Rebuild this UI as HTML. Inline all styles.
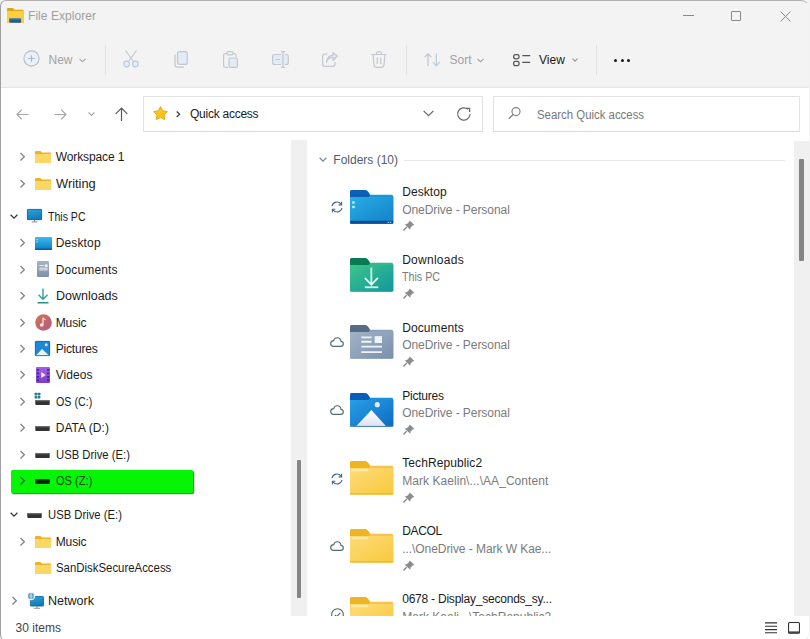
<!DOCTYPE html>
<html><head><meta charset="utf-8"><style>
*{margin:0;padding:0;box-sizing:border-box}
html,body{width:810px;height:639px;overflow:hidden;background:#fff}
body{position:relative;font-family:"Liberation Sans",sans-serif;font-size:12px;color:#1b1b1b}
.t{position:absolute;white-space:nowrap}
svg{position:absolute;overflow:visible}
.r{position:absolute}
</style></head><body>
<div class="r" style="left:0;top:88px;width:810px;height:551px;background:#fff"></div>
<div class="r" style="left:0;top:0;width:810px;height:88px;background:#f3f3f3"></div>
<div class="r" style="left:0;top:87px;width:810px;height:1px;background:#e5e5e5"></div>
<div class="r" style="left:0;top:0;width:810px;height:641px;border:1px solid #b0b0b0;border-left-color:#a0a0a0;border-right-color:#f2f2f2;border-bottom-color:#cfcfcf;border-radius:6px 9px 8px 6px"></div>
<svg style="left:7.4px;top:8px" width="17" height="15" viewBox="0 0 17 15">
<path d="M0 1 Q0 0 1 0 H6 L7.5 1.8 H16 Q16.6 1.8 16.6 2.5 V14.8 H0Z" fill="#d9a81a"/>
<rect x="0" y="3" width="16.6" height="11.8" rx="0.6" fill="#fbcf3e"/>
<rect x="2.3" y="10.6" width="11.8" height="4.2" rx="0.8" fill="#1c5c9c"/>
<rect x="2.3" y="10.6" width="11.8" height="1.3" fill="#2f7bb8"/>
</svg>
<div class="t " style="left:28px;top:10.34px;font-size:12px;line-height:12px;letter-spacing:0.045px;color:#a0a0a0;">File Explorer</div>
<div class="r" style="left:683px;top:15px;width:11px;height:1px;background:#8a8a8a"></div>
<div class="r" style="left:731px;top:11px;width:10px;height:10px;border:1px solid #8a8a8a;border-radius:1px"></div>
<svg style="left:780px;top:11px" width="11" height="11" viewBox="0 0 11 11"><path d="M0.5 0.5 L10.5 10.5 M10.5 0.5 L0.5 10.5" stroke="#8a8a8a" stroke-width="1"/></svg>
<svg style="left:22.6px;top:50.4px" width="17" height="17" viewBox="0 0 17 17">
<circle cx="8.5" cy="8.5" r="7.6" fill="#e9f0f9" stroke="#b9bcc2" stroke-width="1.1"/>
<path d="M8.5 5.3 V11.7 M5.3 8.5 H11.7" stroke="#b0b4bc" stroke-width="1.1"/></svg>
<div class="t " style="left:48.5px;top:54.44px;font-size:12px;line-height:12px;color:#a2a2a2;">New</div>
<svg style="left:79px;top:58px" width="7" height="5" viewBox="0 0 7 5"><path d="M0.5 0.8 L3.5 3.8 L6.5 0.8" fill="none" stroke="#a2a2a2" stroke-width="1.1"/></svg>
<div class="r" style="left:105px;top:45px;width:1px;height:30px;background:#e2e2e2"></div>
<svg style="left:123px;top:50px" width="16" height="18" viewBox="0 0 16 18">
<circle cx="3.6" cy="14" r="2.8" fill="#e6eef8" stroke="#b9c9df" stroke-width="1.2"/>
<circle cx="12.4" cy="14" r="2.8" fill="#e6eef8" stroke="#b9c9df" stroke-width="1.2"/>
<path d="M2.5 0.5 L10.5 11.5 M13.5 0.5 L5.5 11.5" stroke="#c3c7cf" stroke-width="1.2"/></svg>
<svg style="left:174px;top:51px" width="14" height="17" viewBox="0 0 14 17">
<rect x="3.5" y="0.6" width="9.8" height="12.8" rx="2" fill="#e3ebf5" stroke="#c3c7cf" stroke-width="1.2"/>
<path d="M1 3.5 V13.5 Q1 16.2 3.8 16.2 H10" fill="none" stroke="#c3c7cf" stroke-width="1.2"/></svg>
<svg style="left:223px;top:51px" width="15" height="17" viewBox="0 0 15 17">
<path d="M4 2.5 H2.5 Q0.6 2.5 0.6 4.5 V14.5 Q0.6 16.3 2.5 16.3 H5" fill="none" stroke="#c3c7cf" stroke-width="1.2"/>
<path d="M10 2.5 H11.5 Q13 2.5 13 4.5 V6" fill="none" stroke="#c3c7cf" stroke-width="1.2"/>
<rect x="4" y="0.6" width="6" height="3.2" rx="1" fill="none" stroke="#c3c7cf" stroke-width="1.2"/>
<rect x="6" y="7" width="8.4" height="9.4" rx="1.5" fill="#e3ebf5" stroke="#c3c7cf" stroke-width="1.2"/></svg>
<svg style="left:272px;top:51px" width="17" height="17" viewBox="0 0 17 17">
<rect x="0.6" y="3.5" width="15.7" height="10" rx="2" fill="#e3ebf5"/><path d="M9 3.5 H2.5 Q0.6 3.5 0.6 5.5 V11.5 Q0.6 13.5 2.5 13.5 H9" fill="none" stroke="#c3c7cf" stroke-width="1.2"/>
<path d="M13 3.5 H14.3 Q16.3 3.5 16.3 5.5 V11.5 Q16.3 13.5 14.3 13.5 H13" fill="none" stroke="#c3c7cf" stroke-width="1.2"/>
<path d="M11 0.6 V16.4 M9 0.6 H13 M9 16.4 H13 M3.5 8.5 H8" stroke="#c3c7cf" stroke-width="1.2"/></svg>
<svg style="left:322px;top:52px" width="16" height="15" viewBox="0 0 16 15">
<path d="M5.5 2 H2.5 Q0.6 2 0.6 4 V12 Q0.6 14.3 2.8 14.3 H11 Q13 14.3 13 12 V10" fill="none" stroke="#c3c7cf" stroke-width="1.2"/>
<path d="M4.5 10.5 Q5.5 5.5 11 5.5 V8.5 L15.3 4 L11 0.6 V3.3 Q5 3.5 4.5 10.5Z" fill="#dfe9f5" stroke="#c3c7cf" stroke-width="1.2" stroke-linejoin="round"/></svg>
<svg style="left:371px;top:51px" width="16" height="17" viewBox="0 0 16 17">
<path d="M0.5 3.5 H15.5 M5.5 3.5 V2.5 Q5.5 0.6 8 0.6 Q10.5 0.6 10.5 2.5 V3.5" fill="none" stroke="#c3c7cf" stroke-width="1.2"/>
<path d="M2 3.5 L3 14 Q3.3 16.3 5.5 16.3 H10.5 Q12.7 16.3 13 14 L14 3.5" fill="none" stroke="#c3c7cf" stroke-width="1.2"/>
<path d="M6.3 6.5 V13 M9.7 6.5 V13" stroke="#c3c7cf" stroke-width="1.2"/></svg>
<div class="r" style="left:406px;top:45px;width:1px;height:30px;background:#e2e2e2"></div>
<svg style="left:424px;top:53px" width="17" height="14" viewBox="0 0 17 14">
<path d="M4 13 V0.8 M0.6 4.2 L4 0.8 L7.4 4.2" fill="none" stroke="#c0c4cc" stroke-width="1.2"/>
<path d="M12.3 0.4 V12.6 M8.9 9.2 L12.3 12.6 L15.7 9.2" fill="none" stroke="#b4cbe4" stroke-width="1.2"/></svg>
<div class="t " style="left:449.5px;top:54.44px;font-size:12px;line-height:12px;color:#a2a2a2;">Sort</div>
<svg style="left:477px;top:58px" width="7" height="5" viewBox="0 0 7 5"><path d="M0.5 0.8 L3.5 3.8 L6.5 0.8" fill="none" stroke="#a2a2a2" stroke-width="1.1"/></svg>
<svg style="left:513px;top:53.5px" width="18" height="13" viewBox="0 0 18 13">
<rect x="0.65" y="0.65" width="5.4" height="4.2" rx="1.8" fill="none" stroke="#555" stroke-width="1.3"/>
<rect x="0.65" y="7.3" width="5.4" height="4.4" rx="1.8" fill="none" stroke="#555" stroke-width="1.3"/>
<path d="M9.3 1.6 H17.2 M9.3 8.4 H17.2" stroke="#555" stroke-width="1.3"/></svg>
<div class="t " style="left:539px;top:54.44px;font-size:12px;line-height:12px;color:#1b1b1b;">View</div>
<svg style="left:572px;top:58px" width="6" height="4" viewBox="0 0 6 4"><path d="M0.5 0.6 L3 3.2 L5.5 0.6" fill="none" stroke="#999" stroke-width="1.2"/></svg>
<div class="r" style="left:596px;top:45px;width:1px;height:30px;background:#e2e2e2"></div>
<div class="r" style="left:614px;top:59px;width:3.3px;height:3.3px;border-radius:50%;background:#1b1b1b"></div>
<div class="r" style="left:620.5px;top:59px;width:3.3px;height:3.3px;border-radius:50%;background:#1b1b1b"></div>
<div class="r" style="left:627px;top:59px;width:3.3px;height:3.3px;border-radius:50%;background:#1b1b1b"></div>
<svg style="left:16px;top:109px" width="13" height="11" viewBox="0 0 13 11"><path d="M12.5 5.5 H1 M5.8 0.6 L1 5.5 L5.8 10.4" fill="none" stroke="#a6a6a6" stroke-width="1.2"/></svg>
<svg style="left:54px;top:109px" width="13" height="11" viewBox="0 0 13 11"><path d="M0.5 5.5 H12 M7.2 0.6 L12 5.5 L7.2 10.4" fill="none" stroke="#a6a6a6" stroke-width="1.2"/></svg>
<svg style="left:88px;top:112px" width="7" height="4" viewBox="0 0 7 4"><path d="M0.5 0.5 L3.5 3.5 L6.5 0.5" fill="none" stroke="#a6a6a6" stroke-width="1.1"/></svg>
<svg style="left:115px;top:107px" width="13" height="14" viewBox="0 0 13 14"><path d="M6.5 14 V1 M0.7 6.8 L6.5 1 L12.3 6.8" fill="none" stroke="#5a5a5a" stroke-width="1.2"/></svg>
<div class="r" style="left:143px;top:96px;width:340px;height:36px;background:#fff;border:1px solid #e3e3e3;border-bottom-color:#d9d9d9"></div>
<svg style="left:153.3px;top:105.5px" width="15" height="15" viewBox="0 0 15 15"><path d="M7.50 0.60 L9.73 4.73 L14.35 5.58 L11.11 8.97 L11.73 13.62 L7.50 11.60 L3.27 13.62 L3.89 8.97 L0.65 5.58 L5.27 4.73Z" fill="#fcc21b" stroke="#dca812" stroke-width="0.9" stroke-linejoin="round"/></svg>
<svg style="left:176.3px;top:110.6px" width="5" height="7" viewBox="0 0 5 7"><path d="M0.7 0.5 L3.6 3.2 L0.7 5.9" fill="none" stroke="#444" stroke-width="1.3"/></svg>
<div class="t " style="left:190px;top:108.14px;font-size:12px;line-height:12px;color:#1b1b1b;letter-spacing:-0.25px;">Quick access</div>
<svg style="left:423px;top:110px" width="11" height="7" viewBox="0 0 11 7"><path d="M0.6 0.8 L5.5 5.7 L10.4 0.8" fill="none" stroke="#666" stroke-width="1.2"/></svg>
<svg style="left:457px;top:106.6px" width="14" height="14" viewBox="0 0 14 14"><path d="M13 7.3 A6.2 6.2 0 1 1 11 2.4" fill="none" stroke="#6a6a6a" stroke-width="1.25"/><path d="M9 1.4 H12.6 V5" fill="none" stroke="#6a6a6a" stroke-width="1.25"/></svg>
<div class="r" style="left:493px;top:96px;width:307px;height:36px;background:#fff;border:1px solid #e3e3e3;border-bottom-color:#d9d9d9"></div>
<svg style="left:508px;top:107px" width="13" height="13" viewBox="0 0 13 13"><circle cx="8" cy="4.6" r="4" fill="none" stroke="#808080" stroke-width="1.15"/><path d="M5.1 7.5 L0.8 11.8" stroke="#808080" stroke-width="1.3"/></svg>
<div class="t " style="left:536.5px;top:109.04px;font-size:12px;line-height:12px;transform:scaleX(0.9495);transform-origin:0 0;color:#777777;">Search Quick access</div>
<div class="r" style="left:10.5px;top:470px;width:182.5px;height:22.5px;background:#06f406;border-radius:1.5px;box-shadow:1px 1px 1.5px rgba(20,70,20,0.85)"></div>
<svg style="left:20.4px;top:153.4px" width="5" height="8" viewBox="0 0 5 8"><path d="M0.5 0.1 L4.3 3.8 L0.5 7.5" fill="none" stroke="#858585" stroke-width="1.35"/></svg>
<svg style="left:35px;top:151.4px" width="16" height="12" viewBox="0 0 16 12">
<path d="M0 1 Q0 0 1 0 H5.5 L7 1.5 H15 Q16 1.5 16 2.5 V11 Q16 12 15 12 H1 Q0 12 0 11Z" fill="#e9b42c"/>
<path d="M0 3 H16 V11 Q16 12 15 12 H1 Q0 12 0 11Z" fill="#fcd766"/>
</svg>
<div class="t " style="left:55.7px;top:151.44px;font-size:12px;line-height:12px;letter-spacing:-0.110px;color:#1b1b1b;">Workspace 1</div>
<svg style="left:20.4px;top:180.20000000000002px" width="5" height="8" viewBox="0 0 5 8"><path d="M0.5 0.1 L4.3 3.8 L0.5 7.5" fill="none" stroke="#858585" stroke-width="1.35"/></svg>
<svg style="left:35px;top:178.2px" width="16" height="12" viewBox="0 0 16 12">
<path d="M0 1 Q0 0 1 0 H5.5 L7 1.5 H15 Q16 1.5 16 2.5 V11 Q16 12 15 12 H1 Q0 12 0 11Z" fill="#e9b42c"/>
<path d="M0 3 H16 V11 Q16 12 15 12 H1 Q0 12 0 11Z" fill="#fcd766"/>
</svg>
<div class="t " style="left:55.7px;top:178.24px;font-size:12px;line-height:12px;transform:scaleX(1.0694);transform-origin:0 0;color:#1b1b1b;">Writing</div>
<svg style="left:10.4px;top:213.9px" width="8" height="5" viewBox="0 0 8 5"><path d="M0.6 0.7 L4 4.1 L7.4 0.7" fill="none" stroke="#3a3a3a" stroke-width="1.3"/></svg>
<svg style="left:27px;top:209px" width="15" height="14" viewBox="0 0 15 14">
<defs><linearGradient id="gpc" x1="0" y1="0" x2="0.3" y2="1"><stop offset="0" stop-color="#2aa8dc"/><stop offset="1" stop-color="#1479b8"/></linearGradient></defs>
<rect x="0" y="0" width="15" height="11" rx="0.8" fill="url(#gpc)"/><rect x="0.4" y="0.4" width="14.2" height="10.2" rx="0.6" fill="none" stroke="#0f6898" stroke-width="0.7"/>
<rect x="7" y="11" width="1.2" height="1.5" fill="#8a8a8a"/><rect x="4.8" y="12.4" width="5.6" height="1" fill="#8a8a8a"/></svg>
<div class="t " style="left:48px;top:210.74px;font-size:12px;line-height:12px;transform:scaleX(0.8788);transform-origin:0 0;color:#1b1b1b;">This PC</div>
<svg style="left:20.4px;top:239.4px" width="5" height="8" viewBox="0 0 5 8"><path d="M0.5 0.1 L4.3 3.8 L0.5 7.5" fill="none" stroke="#858585" stroke-width="1.35"/></svg>
<svg style="left:35px;top:236.8px" width="17" height="13" viewBox="0 0 17 13">
<defs><linearGradient id="gdk" x1="0" y1="0" x2="0" y2="1"><stop offset="0" stop-color="#3bbcee"/><stop offset="1" stop-color="#0c7bc6"/></linearGradient></defs>
<rect x="0" y="0" width="17" height="13" rx="1" fill="url(#gdk)"/><rect x="0" y="11.5" width="17" height="1.5" fill="#0a5d9e"/>
<rect x="1.5" y="2" width="1.2" height="1.2" fill="#bfeaff"/><rect x="1.5" y="4.2" width="1.2" height="1.2" fill="#bfeaff"/></svg>
<div class="t " style="left:55.7px;top:237.44px;font-size:12px;line-height:12px;letter-spacing:0.147px;color:#1b1b1b;">Desktop</div>
<svg style="left:20.4px;top:265.79999999999995px" width="5" height="8" viewBox="0 0 5 8"><path d="M0.5 0.1 L4.3 3.8 L0.5 7.5" fill="none" stroke="#858585" stroke-width="1.35"/></svg>
<svg style="left:37px;top:260.9px" width="12" height="16" viewBox="0 0 12 16">
<defs><linearGradient id="gdc" x1="0" y1="0" x2="0" y2="1"><stop offset="0" stop-color="#a7b4c4"/><stop offset="1" stop-color="#7f8fa4"/></linearGradient></defs>
<rect x="0" y="0" width="12" height="16" rx="1.2" fill="url(#gdc)"/>
<path d="M2.3 4.6 H6.8 M2.3 7.2 H10.7 M2.3 8.9 H10.7" stroke="#f2f5f9" stroke-width="0.9"/><rect x="7.8" y="3.4" width="2.8" height="2.6" fill="#eaf1f8"/></svg>
<div class="t " style="left:55.7px;top:263.84px;font-size:12px;line-height:12px;letter-spacing:0.139px;color:#1b1b1b;">Documents</div>
<svg style="left:20.4px;top:292.29999999999995px" width="5" height="8" viewBox="0 0 5 8"><path d="M0.5 0.1 L4.3 3.8 L0.5 7.5" fill="none" stroke="#858585" stroke-width="1.35"/></svg>
<svg style="left:37px;top:287.59999999999997px" width="12" height="16" viewBox="0 0 12 16">
<path d="M6 0.5 V11 M1.5 6.8 L6 11.3 L10.5 6.8" fill="none" stroke="#2aa39a" stroke-width="1.4"/><rect x="0.5" y="14" width="11" height="1.5" fill="#2a8f8c"/></svg>
<div class="t " style="left:55.7px;top:290.34px;font-size:12px;line-height:12px;transform:scaleX(1.0408);transform-origin:0 0;color:#1b1b1b;">Downloads</div>
<svg style="left:20.4px;top:318.59999999999997px" width="5" height="8" viewBox="0 0 5 8"><path d="M0.5 0.1 L4.3 3.8 L0.5 7.5" fill="none" stroke="#858585" stroke-width="1.35"/></svg>
<svg style="left:35px;top:314.2px" width="17" height="17" viewBox="0 0 17 17">
<defs><linearGradient id="gmu" x1="0" y1="0" x2="1" y2="1"><stop offset="0" stop-color="#d4764a"/><stop offset="1" stop-color="#b0578e"/></linearGradient></defs>
<circle cx="8.5" cy="8.5" r="8.3" fill="url(#gmu)"/>
<path d="M8 3.8 V10.8" stroke="#fde8ec" stroke-width="1.2"/><path d="M8 3.8 Q9 5.6 10.6 5.8" fill="none" stroke="#fde8ec" stroke-width="1.1"/><circle cx="6.7" cy="11" r="1.8" fill="#fde8ec"/></svg>
<div class="t " style="left:55.7px;top:316.64px;font-size:12px;line-height:12px;letter-spacing:-0.111px;color:#1b1b1b;">Music</div>
<svg style="left:20.4px;top:344.9px" width="5" height="8" viewBox="0 0 5 8"><path d="M0.5 0.1 L4.3 3.8 L0.5 7.5" fill="none" stroke="#858585" stroke-width="1.35"/></svg>
<svg style="left:35.4px;top:341.0px" width="15" height="15" viewBox="0 0 15 15">
<rect x="0" y="0" width="15" height="15" rx="1.2" fill="#1e88d6"/>
<path d="M1 14.6 L7 8 L14 14.6Z" fill="#eaf4fc"/><circle cx="11.2" cy="3.8" r="1.5" fill="#bfe6fb"/><rect x="0.35" y="0.35" width="14.3" height="14.3" rx="1" fill="none" stroke="#125f9c" stroke-width="0.7"/></svg>
<div class="t " style="left:55.7px;top:342.94px;font-size:12px;line-height:12px;letter-spacing:-0.192px;color:#1b1b1b;">Pictures</div>
<svg style="left:20.4px;top:371.4px" width="5" height="8" viewBox="0 0 5 8"><path d="M0.5 0.1 L4.3 3.8 L0.5 7.5" fill="none" stroke="#858585" stroke-width="1.35"/></svg>
<svg style="left:36.3px;top:367.0px" width="14" height="16" viewBox="0 0 14 16">
<defs><linearGradient id="gvd" x1="0" y1="0" x2="0" y2="1"><stop offset="0" stop-color="#a35ee8"/><stop offset="1" stop-color="#7b3fc4"/></linearGradient></defs>
<rect x="0" y="0" width="14" height="16" rx="1" fill="url(#gvd)"/>
<path d="M0.8 2.8 H3 M0.8 6.4 H3 M0.8 9.8 H3 M0.8 13.2 H3 M11 2.8 H13.2 M11 6.4 H13.2 M11 9.8 H13.2 M11 13.2 H13.2" stroke="#4b2490" stroke-width="1.7"/>
<path d="M5.2 5 L9.8 8 L5.2 11Z" fill="#f6e6f8"/></svg>
<div class="t " style="left:55.7px;top:369.44px;font-size:12px;line-height:12px;letter-spacing:0.066px;color:#1b1b1b;">Videos</div>
<svg style="left:20.4px;top:397.99999999999994px" width="5" height="8" viewBox="0 0 5 8"><path d="M0.5 0.1 L4.3 3.8 L0.5 7.5" fill="none" stroke="#858585" stroke-width="1.35"/></svg>
<svg style="left:35.4px;top:391.99999999999994px" width="15" height="14" viewBox="0 0 15 14"><rect x="-0.4" y="0.8" width="2.7" height="2.7" rx="0.4" fill="#2e7d8c"/><rect x="2.7" y="0.8" width="2.7" height="2.7" rx="0.4" fill="#2e7d8c"/><rect x="-0.4" y="3.9" width="2.7" height="2.7" rx="0.4" fill="#2e7d8c"/><rect x="2.7" y="3.9" width="2.7" height="2.7" rx="0.4" fill="#2e7d8c"/><rect x="0.3" y="8" width="14.4" height="5.1" rx="0.8" fill="#333333"/><rect x="0.3" y="8" width="14.4" height="1.3" rx="0.6" fill="#6e6e6e"/></svg>
<div class="t " style="left:55.7px;top:396.04px;font-size:12px;line-height:12px;transform:scaleX(0.8904);transform-origin:0 0;color:#1b1b1b;">OS (C:)</div>
<svg style="left:20.4px;top:424.4px" width="5" height="8" viewBox="0 0 5 8"><path d="M0.5 0.1 L4.3 3.8 L0.5 7.5" fill="none" stroke="#858585" stroke-width="1.35"/></svg>
<svg style="left:35.4px;top:418.4px" width="15" height="14" viewBox="0 0 15 14"><rect x="0.3" y="8" width="14.4" height="5.1" rx="0.8" fill="#333333"/><rect x="0.3" y="8" width="14.4" height="1.3" rx="0.6" fill="#6e6e6e"/></svg>
<div class="t " style="left:55.7px;top:422.44px;font-size:12px;line-height:12px;letter-spacing:0.039px;color:#1b1b1b;">DATA (D:)</div>
<svg style="left:20.4px;top:451.4px" width="5" height="8" viewBox="0 0 5 8"><path d="M0.5 0.1 L4.3 3.8 L0.5 7.5" fill="none" stroke="#858585" stroke-width="1.35"/></svg>
<svg style="left:35.4px;top:445.4px" width="15" height="14" viewBox="0 0 15 14"><rect x="0.3" y="8" width="14.4" height="5.1" rx="0.8" fill="#333333"/><rect x="0.3" y="8" width="14.4" height="1.3" rx="0.6" fill="#6e6e6e"/></svg>
<div class="t " style="left:55.7px;top:449.44px;font-size:12px;line-height:12px;transform:scaleX(0.9393);transform-origin:0 0;color:#1b1b1b;">USB Drive (E:)</div>
<svg style="left:20.4px;top:477.4px" width="5" height="8" viewBox="0 0 5 8"><path d="M0.5 0.1 L4.3 3.8 L0.5 7.5" fill="none" stroke="#2a6a2a" stroke-width="1.35"/></svg>
<svg style="left:35.4px;top:471.4px" width="15" height="14" viewBox="0 0 15 14"><rect x="0.3" y="8" width="14.4" height="5.1" rx="0.8" fill="#042a04"/><rect x="0.3" y="8" width="14.4" height="1.3" rx="0.6" fill="#0a4a0a"/></svg>
<div class="t " style="left:55.7px;top:475.44px;font-size:12px;line-height:12px;transform:scaleX(0.9234);transform-origin:0 0;color:#0d4a0d;">OS (Z:)</div>
<svg style="left:10.4px;top:512.3px" width="8" height="5" viewBox="0 0 8 5"><path d="M0.6 0.7 L4 4.1 L7.4 0.7" fill="none" stroke="#3a3a3a" stroke-width="1.3"/></svg>
<svg style="left:27.2px;top:505.0999999999999px" width="15" height="14" viewBox="0 0 15 14"><rect x="0.3" y="8" width="14.4" height="5.1" rx="0.8" fill="#333333"/><rect x="0.3" y="8" width="14.4" height="1.3" rx="0.6" fill="#6e6e6e"/></svg>
<div class="t " style="left:48px;top:509.14px;font-size:12px;line-height:12px;transform:scaleX(0.9393);transform-origin:0 0;color:#1b1b1b;">USB Drive (E:)</div>
<svg style="left:20.4px;top:537.5px" width="5" height="8" viewBox="0 0 5 8"><path d="M0.5 0.1 L4.3 3.8 L0.5 7.5" fill="none" stroke="#858585" stroke-width="1.35"/></svg>
<svg style="left:35px;top:535.5px" width="16" height="12" viewBox="0 0 16 12">
<path d="M0 1 Q0 0 1 0 H5.5 L7 1.5 H15 Q16 1.5 16 2.5 V11 Q16 12 15 12 H1 Q0 12 0 11Z" fill="#e9b42c"/>
<path d="M0 3 H16 V11 Q16 12 15 12 H1 Q0 12 0 11Z" fill="#fcd766"/>
</svg>
<div class="t " style="left:55.7px;top:535.54px;font-size:12px;line-height:12px;letter-spacing:-0.111px;color:#1b1b1b;">Music</div>
<svg style="left:35px;top:562.0px" width="16" height="12" viewBox="0 0 16 12">
<path d="M0 1 Q0 0 1 0 H5.5 L7 1.5 H15 Q16 1.5 16 2.5 V11 Q16 12 15 12 H1 Q0 12 0 11Z" fill="#e9b42c"/>
<path d="M0 3 H16 V11 Q16 12 15 12 H1 Q0 12 0 11Z" fill="#fcd766"/>
</svg>
<div class="t " style="left:55.7px;top:562.04px;font-size:12px;line-height:12px;transform:scaleX(0.9499);transform-origin:0 0;color:#1b1b1b;">SanDiskSecureAccess</div>
<svg style="left:11.7px;top:596.6999999999999px" width="5" height="8" viewBox="0 0 5 8"><path d="M0.5 0.1 L4.3 3.8 L0.5 7.5" fill="none" stroke="#858585" stroke-width="1.35"/></svg>
<svg style="left:26.5px;top:591.5px" width="17" height="17" viewBox="0 0 17 17">
<defs><linearGradient id="gnt" x1="0" y1="0" x2="0.3" y2="1"><stop offset="0" stop-color="#2aa6dc"/><stop offset="1" stop-color="#1279b8"/></linearGradient></defs>
<rect x="3.4" y="4.5" width="13.1" height="9.6" rx="0.6" fill="url(#gnt)" stroke="#0e6a9a" stroke-width="0.8"/>
<rect x="9.3" y="14.1" width="1.2" height="1.8" fill="#8a8a8a"/><rect x="6.8" y="15.8" width="6.2" height="1" fill="#9a9a9a"/>
<circle cx="4" cy="4" r="3.8" fill="#5f9cc2" stroke="#ffffff" stroke-width="1"/><path d="M1.2 4 H6.8 M4 1 Q2.6 4 4 7 Q5.4 4 4 1" fill="none" stroke="#cbe6f5" stroke-width="0.6"/></svg>
<div class="t " style="left:48px;top:594.74px;font-size:12px;line-height:12px;transform:scaleX(1.0428);transform-origin:0 0;color:#1b1b1b;">Network</div>
<div class="r" style="left:291px;top:140px;width:16px;height:476px;background:#f0f0f0"></div>
<div class="r" style="left:296.8px;top:460px;width:4.4px;height:138px;background:#858585;border-radius:1px"></div>
<svg style="left:318.5px;top:157.4px" width="8" height="5" viewBox="0 0 8 5"><path d="M0.6 0.7 L4 4.1 L7.4 0.7" fill="none" stroke="#7d8996" stroke-width="1.3"/></svg>
<div class="t " style="left:333.3px;top:153.84px;font-size:12px;line-height:12px;color:#4f5e6e;">Folders (10)</div>
<div class="r" style="left:404px;top:160px;width:381px;height:1px;background:#e8e8e8"></div>
<div class="r" style="left:793.5px;top:141px;width:16.5px;height:475px;background:#f0f0f0"></div>
<div class="r" style="left:798.8px;top:159px;width:5.4px;height:102px;background:#858585;border-radius:1px"></div>
<div class="r" style="left:307px;top:172px;width:486px;height:444px;overflow:hidden">
<div class="r" style="left:-307px;top:-172px;width:810px;height:639px">
<svg style="left:350px;top:189.6px" width="43.3" height="34.5" viewBox="0 0 44 35" preserveAspectRatio="none"><defs><linearGradient id="g189" x1="0" y1="0" x2="1" y2="1"><stop offset="0" stop-color="#28aee4"/><stop offset="1" stop-color="#137fc9"/></linearGradient></defs>
<path d="M0 2 Q0 0 2 0 H15 Q17 0 18.3 1.8 L20.3 4.7 H42 Q44 4.7 44 6.7 V34 H0Z" fill="#1799d6"/><path d="M0 2 Q0 0 2 0 H15 Q17 0 18.3 1.8 L20.3 4.7 Q19.5 7.3 18 7.3 H0Z" fill="#0b5fb4"/><path d="M0 7.2 H44 V32.5 Q44 34.3 42.2 34.3 H1.8 Q0 34.3 0 32.5Z" fill="url(#g189)"/><rect x="0" y="31.3" width="44" height="3" rx="1" fill="#0a4f95"/>
<rect x="2.2" y="11.5" width="2.6" height="2.4" rx="0.6" fill="#b8f2ff"/><rect x="2.2" y="16" width="2.6" height="2.4" rx="0.6" fill="#b8f2ff"/>
<rect x="38.3" y="32.2" width="1.3" height="1.3" fill="#9fdcff"/><rect x="40.6" y="32.2" width="1.3" height="1.3" fill="#9fdcff"/></svg>
<svg style="left:330.5px;top:201.4px" width="12" height="12" viewBox="0 0 12 12"><path d="M1 5 A5 5 0 0 1 10 3.2 M11 7 A5 5 0 0 1 2 8.8" fill="none" stroke="#436a88" stroke-width="1.15"/><path d="M10.6 0.8 V3.8 H7.6 M1.4 11.2 V8.2 H4.4" fill="none" stroke="#436a88" stroke-width="1.15"/></svg>
<div class="t " style="left:402.2px;top:185.84px;font-size:12px;line-height:12px;letter-spacing:0.081px;color:#1b1b1b;">Desktop</div>
<div class="t " style="left:402.2px;top:203.54px;font-size:12px;line-height:12px;letter-spacing:-0.061px;color:#7b7b7b;">OneDrive - Personal</div>
<svg style="left:402.5px;top:220.0px" width="12" height="11" viewBox="0 0 12 11"><path d="M6.8 0.6 L11.4 5 L9.6 5.6 L7.6 7.6 L7.2 9.8 L1.8 4.4 L4 4 L6 2Z" fill="#8c8c8c"/><path d="M3.8 7 L0.5 10.5" stroke="#8c8c8c" stroke-width="1.3"/></svg>
<svg style="left:350px;top:257.5px" width="43.3" height="34.5" viewBox="0 0 44 35" preserveAspectRatio="none"><defs><linearGradient id="g257" x1="0" y1="0" x2="1" y2="1"><stop offset="0" stop-color="#3cc48c"/><stop offset="1" stop-color="#12979c"/></linearGradient></defs>
<path d="M0 2 Q0 0 2 0 H15 Q17 0 18.3 1.8 L20.3 4.7 H42 Q44 4.7 44 6.7 V34 H0Z" fill="#2fb98e"/><path d="M0 2 Q0 0 2 0 H15 Q17 0 18.3 1.8 L20.3 4.7 Q19.5 7.3 18 7.3 H0Z" fill="#0b7a52"/><path d="M0 7.2 H44 V32.5 Q44 34.3 42.2 34.3 H1.8 Q0 34.3 0 32.5Z" fill="url(#g257)"/><path d="M21.7 10 V27 M15 20.2 L21.7 27 L28.4 20.2" fill="none" stroke="#d4fff2" stroke-width="1.8"/><rect x="15" y="28.8" width="13.7" height="1.8" fill="#d4fff2"/></svg>
<div class="t " style="left:402.2px;top:253.74px;font-size:12px;line-height:12px;letter-spacing:0.266px;color:#1b1b1b;">Downloads</div>
<div class="t " style="left:402.2px;top:271.44px;font-size:12px;line-height:12px;transform:scaleX(0.8905);transform-origin:0 0;color:#7b7b7b;">This PC</div>
<svg style="left:402.5px;top:287.9px" width="12" height="11" viewBox="0 0 12 11"><path d="M6.8 0.6 L11.4 5 L9.6 5.6 L7.6 7.6 L7.2 9.8 L1.8 4.4 L4 4 L6 2Z" fill="#8c8c8c"/><path d="M3.8 7 L0.5 10.5" stroke="#8c8c8c" stroke-width="1.3"/></svg>
<svg style="left:350px;top:325.4px" width="43.3" height="34.5" viewBox="0 0 44 35" preserveAspectRatio="none"><defs><linearGradient id="g325" x1="0" y1="0" x2="1" y2="1"><stop offset="0" stop-color="#a3b3c7"/><stop offset="1" stop-color="#7890ab"/></linearGradient></defs>
<path d="M0 2 Q0 0 2 0 H15 Q17 0 18.3 1.8 L20.3 4.7 H42 Q44 4.7 44 6.7 V34 H0Z" fill="#8ea2b9"/><path d="M0 2 Q0 0 2 0 H15 Q17 0 18.3 1.8 L20.3 4.7 Q19.5 7.3 18 7.3 H0Z" fill="#566c82"/><path d="M0 7.2 H44 V32.5 Q44 34.3 42.2 34.3 H1.8 Q0 34.3 0 32.5Z" fill="url(#g325)"/><path d="M11.5 12.5 H22 M11.5 17 H22 M11.5 22 H32.5 M11.5 27.5 H32.5" stroke="#eef3f8" stroke-width="1.8"/><rect x="25" y="11.3" width="7.5" height="7" fill="#eef3f8"/></svg>
<svg style="left:329.8px;top:337.1px" width="14" height="10" viewBox="0 0 14 10"><path d="M3.5 9.3 H10.8 Q13.3 9.3 13.3 6.9 Q13.3 4.6 11 4.4 Q10.6 0.7 7.2 0.7 Q4.4 0.7 3.7 3.6 Q0.7 3.8 0.7 6.5 Q0.7 9.3 3.5 9.3Z" fill="none" stroke="#526c78" stroke-width="1.15"/></svg>
<div class="t " style="left:402.2px;top:321.64px;font-size:12px;line-height:12px;letter-spacing:0.102px;color:#1b1b1b;">Documents</div>
<div class="t " style="left:402.2px;top:339.34px;font-size:12px;line-height:12px;letter-spacing:-0.061px;color:#7b7b7b;">OneDrive - Personal</div>
<svg style="left:402.5px;top:355.8px" width="12" height="11" viewBox="0 0 12 11"><path d="M6.8 0.6 L11.4 5 L9.6 5.6 L7.6 7.6 L7.2 9.8 L1.8 4.4 L4 4 L6 2Z" fill="#8c8c8c"/><path d="M3.8 7 L0.5 10.5" stroke="#8c8c8c" stroke-width="1.3"/></svg>
<svg style="left:350px;top:393.3px" width="43.3" height="34.5" viewBox="0 0 44 35" preserveAspectRatio="none"><defs><linearGradient id="g393" x1="0" y1="0" x2="1" y2="1"><stop offset="0" stop-color="#2a9de6"/><stop offset="1" stop-color="#0b6cc3"/></linearGradient></defs>
<path d="M0 2 Q0 0 2 0 H15 Q17 0 18.3 1.8 L20.3 4.7 H42 Q44 4.7 44 6.7 V34 H0Z" fill="#1b8fe0"/><path d="M0 2 Q0 0 2 0 H15 Q17 0 18.3 1.8 L20.3 4.7 Q19.5 7.3 18 7.3 H0Z" fill="#0a5db6"/><path d="M0 7.2 H44 V32.5 Q44 34.3 42.2 34.3 H1.8 Q0 34.3 0 32.5Z" fill="url(#g393)"/><defs><linearGradient id="mg393" x1="0" y1="0" x2="0" y2="1"><stop offset="0" stop-color="#ffffff"/><stop offset="1" stop-color="#dfe3f0"/></linearGradient></defs>
<path d="M6.5 33.6 L21.7 17.2 L36.5 33.6Z" fill="url(#mg393)"/><circle cx="27.7" cy="11.8" r="2.6" fill="#d6f0ff"/><rect x="0" y="33.3" width="44" height="1" fill="#6a7f9a" opacity="0.5"/></svg>
<svg style="left:329.8px;top:405.0px" width="14" height="10" viewBox="0 0 14 10"><path d="M3.5 9.3 H10.8 Q13.3 9.3 13.3 6.9 Q13.3 4.6 11 4.4 Q10.6 0.7 7.2 0.7 Q4.4 0.7 3.7 3.6 Q0.7 3.8 0.7 6.5 Q0.7 9.3 3.5 9.3Z" fill="none" stroke="#526c78" stroke-width="1.15"/></svg>
<div class="t " style="left:402.2px;top:389.54px;font-size:12px;line-height:12px;letter-spacing:-0.235px;color:#1b1b1b;">Pictures</div>
<div class="t " style="left:402.2px;top:407.24px;font-size:12px;line-height:12px;letter-spacing:-0.061px;color:#7b7b7b;">OneDrive - Personal</div>
<svg style="left:402.5px;top:423.7px" width="12" height="11" viewBox="0 0 12 11"><path d="M6.8 0.6 L11.4 5 L9.6 5.6 L7.6 7.6 L7.2 9.8 L1.8 4.4 L4 4 L6 2Z" fill="#8c8c8c"/><path d="M3.8 7 L0.5 10.5" stroke="#8c8c8c" stroke-width="1.3"/></svg>
<svg style="left:350px;top:461.2px" width="43.3" height="34.5" viewBox="0 0 44 35" preserveAspectRatio="none"><defs><linearGradient id="g461" x1="0" y1="0" x2="1" y2="1"><stop offset="0" stop-color="#fddb78"/><stop offset="1" stop-color="#f9c93c"/></linearGradient></defs>
<path d="M0 2 Q0 0 2 0 H15 Q17 0 18.3 1.8 L20.3 4.7 H42 Q44 4.7 44 6.7 V34 H0Z" fill="#f3c452"/><path d="M0 2 Q0 0 2 0 H15 Q17 0 18.3 1.8 L20.3 4.7 Q19.5 7.3 18 7.3 H0Z" fill="#edb425"/><path d="M0 7.2 H44 V32.5 Q44 34.3 42.2 34.3 H1.8 Q0 34.3 0 32.5Z" fill="url(#g461)"/><rect x="1.5" y="8.2" width="17" height="2.2" fill="#fff0c0" opacity="0.75"/><path d="M0 33.3 H44" stroke="#e6b23a" stroke-width="1"/></svg>
<svg style="left:330.5px;top:473.0px" width="12" height="12" viewBox="0 0 12 12"><path d="M1 5 A5 5 0 0 1 10 3.2 M11 7 A5 5 0 0 1 2 8.8" fill="none" stroke="#436a88" stroke-width="1.15"/><path d="M10.6 0.8 V3.8 H7.6 M1.4 11.2 V8.2 H4.4" fill="none" stroke="#436a88" stroke-width="1.15"/></svg>
<div class="t " style="left:402.2px;top:457.44px;font-size:12px;line-height:12px;letter-spacing:0.098px;color:#1b1b1b;">TechRepublic2</div>
<div class="t " style="left:402.2px;top:475.14px;font-size:12px;line-height:12px;letter-spacing:0.052px;color:#7b7b7b;">Mark Kaelin\...\AA_Content</div>
<svg style="left:402.5px;top:491.6px" width="12" height="11" viewBox="0 0 12 11"><path d="M6.8 0.6 L11.4 5 L9.6 5.6 L7.6 7.6 L7.2 9.8 L1.8 4.4 L4 4 L6 2Z" fill="#8c8c8c"/><path d="M3.8 7 L0.5 10.5" stroke="#8c8c8c" stroke-width="1.3"/></svg>
<svg style="left:350px;top:529.1px" width="43.3" height="34.5" viewBox="0 0 44 35" preserveAspectRatio="none"><defs><linearGradient id="g529" x1="0" y1="0" x2="1" y2="1"><stop offset="0" stop-color="#fddb78"/><stop offset="1" stop-color="#f9c93c"/></linearGradient></defs>
<path d="M0 2 Q0 0 2 0 H15 Q17 0 18.3 1.8 L20.3 4.7 H42 Q44 4.7 44 6.7 V34 H0Z" fill="#f3c452"/><path d="M0 2 Q0 0 2 0 H15 Q17 0 18.3 1.8 L20.3 4.7 Q19.5 7.3 18 7.3 H0Z" fill="#edb425"/><path d="M0 7.2 H44 V32.5 Q44 34.3 42.2 34.3 H1.8 Q0 34.3 0 32.5Z" fill="url(#g529)"/><rect x="1.5" y="8.2" width="17" height="2.2" fill="#fff0c0" opacity="0.75"/><path d="M0 33.3 H44" stroke="#e6b23a" stroke-width="1"/></svg>
<svg style="left:329.8px;top:540.8px" width="14" height="10" viewBox="0 0 14 10"><path d="M3.5 9.3 H10.8 Q13.3 9.3 13.3 6.9 Q13.3 4.6 11 4.4 Q10.6 0.7 7.2 0.7 Q4.4 0.7 3.7 3.6 Q0.7 3.8 0.7 6.5 Q0.7 9.3 3.5 9.3Z" fill="none" stroke="#526c78" stroke-width="1.15"/></svg>
<div class="t " style="left:402.2px;top:525.34px;font-size:12px;line-height:12px;letter-spacing:-0.336px;color:#1b1b1b;">DACOL</div>
<div class="t " style="left:402.2px;top:543.04px;font-size:12px;line-height:12px;letter-spacing:-0.061px;color:#7b7b7b;">...\OneDrive - Mark W Kae...</div>
<svg style="left:402.5px;top:559.5px" width="12" height="11" viewBox="0 0 12 11"><path d="M6.8 0.6 L11.4 5 L9.6 5.6 L7.6 7.6 L7.2 9.8 L1.8 4.4 L4 4 L6 2Z" fill="#8c8c8c"/><path d="M3.8 7 L0.5 10.5" stroke="#8c8c8c" stroke-width="1.3"/></svg>
<svg style="left:350px;top:597.0px" width="43.3" height="34.5" viewBox="0 0 44 35" preserveAspectRatio="none"><defs><linearGradient id="g597" x1="0" y1="0" x2="1" y2="1"><stop offset="0" stop-color="#fddb78"/><stop offset="1" stop-color="#f9c93c"/></linearGradient></defs>
<path d="M0 2 Q0 0 2 0 H15 Q17 0 18.3 1.8 L20.3 4.7 H42 Q44 4.7 44 6.7 V34 H0Z" fill="#f3c452"/><path d="M0 2 Q0 0 2 0 H15 Q17 0 18.3 1.8 L20.3 4.7 Q19.5 7.3 18 7.3 H0Z" fill="#edb425"/><path d="M0 7.2 H44 V32.5 Q44 34.3 42.2 34.3 H1.8 Q0 34.3 0 32.5Z" fill="url(#g597)"/><rect x="1.5" y="8.2" width="17" height="2.2" fill="#fff0c0" opacity="0.75"/><path d="M0 33.3 H44" stroke="#e6b23a" stroke-width="1"/></svg>
<svg style="left:330.5px;top:608.4px" width="13" height="13" viewBox="0 0 13 13"><circle cx="6.5" cy="6.5" r="5.8" fill="none" stroke="#427258" stroke-width="1.1"/><path d="M3.8 6.8 L5.7 8.6 L9.3 4.8" fill="none" stroke="#427258" stroke-width="1.1"/></svg>
<div class="t " style="left:402.2px;top:593.24px;font-size:12px;line-height:12px;letter-spacing:-0.223px;color:#1b1b1b;">0678 - Display_seconds_sy...</div>
<div class="t " style="left:402.2px;top:610.94px;font-size:12px;line-height:12px;letter-spacing:0.011px;color:#7b7b7b;">Mark Kaeli...\TechRepublic2</div>
<svg style="left:402.5px;top:627.4px" width="12" height="11" viewBox="0 0 12 11"><path d="M6.8 0.6 L11.4 5 L9.6 5.6 L7.6 7.6 L7.2 9.8 L1.8 4.4 L4 4 L6 2Z" fill="#8c8c8c"/><path d="M3.8 7 L0.5 10.5" stroke="#8c8c8c" stroke-width="1.3"/></svg>
</div></div>
<div class="t " style="left:15.6px;top:621.64px;font-size:12px;line-height:12px;color:#444;">30 items</div>
<svg style="left:764.8px;top:622px" width="12" height="12" viewBox="0 0 12 12"><path d="M0 0.9 H12 M0 4.3 H12 M0 7.6 H12 M0 10.8 H12" stroke="#333" stroke-width="1.1"/></svg>
<svg style="left:788px;top:621.5px" width="12" height="12" viewBox="0 0 12 12"><rect x="0.55" y="0.55" width="10.9" height="10.6" rx="1" fill="none" stroke="#333" stroke-width="1.1"/><rect x="0.55" y="9.4" width="10.9" height="1.9" fill="#444"/></svg>
</body></html>
